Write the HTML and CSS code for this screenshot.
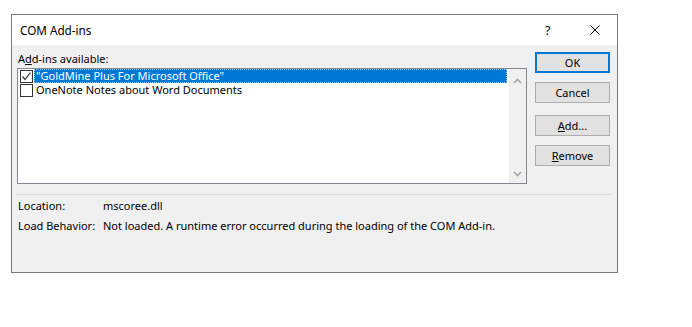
FILE: index.html
```html
<!DOCTYPE html>
<html>
<head>
<meta charset="utf-8">
<link rel="stylesheet" href="styles.css">
</head>
<body>
<div class="dialog">
  <div class="titlebar">
    <span class="title">COM Add-ins</span>
    <span class="help">?</span>
    <span class="close">
      <svg width="10" height="10" viewBox="0 0 10 10"><path d="M0.5 0.5 L9.5 9.5 M9.5 0.5 L0.5 9.5" stroke="#000" stroke-width="1" fill="none"/></svg>
    </span>
  </div>
  <div class="body">
    <div class="top">
      <div class="left">
        <div class="label">A<u>d</u>d-ins available:</div>
        <div class="listbox">
          <div class="items">
            <div class="item">
              <span class="check">
                <svg width="11" height="11" viewBox="0 0 11 11"><path d="M1.5 5.5 L4 8.5 L9.5 1.5" stroke="#333" stroke-width="1.2" fill="none"/></svg>
              </span>
              <span class="text selected">"GoldMine Plus For Microsoft Office"</span>
            </div>
            <div class="item">
              <span class="check"></span>
              <span class="text">OneNote Notes about Word Documents</span>
            </div>
          </div>
          <div class="scrollbar">
            <svg width="9" height="6" viewBox="0 0 9 6"><path d="M1 5 L4.5 1.5 L8 5" stroke="#a6a6a6" stroke-width="1.6" fill="none"/></svg>
            <svg width="9" height="6" viewBox="0 0 9 6"><path d="M1 1 L4.5 4.5 L8 1" stroke="#a6a6a6" stroke-width="1.6" fill="none"/></svg>
          </div>
        </div>
      </div>
      <div class="buttons">
        <div class="btn default">OK</div>
        <div class="btn">Cancel</div>
        <div class="btn gap"><span><u>A</u>dd...</span></div>
        <div class="btn"><span><u>R</u>emove</span></div>
      </div>
    </div>
    <div class="sep"></div>
    <div class="info">
      <div class="row"><span class="key">Location:</span><span>mscoree.dll</span></div>
      <div class="row"><span class="key">Load Behavior:</span><span>Not loaded. A runtime error occurred during the loading of the COM Add-in.</span></div>
    </div>
  </div>
</div>
</body>
</html>
```
FILE: styles.css
```css
* { box-sizing: border-box; }
html, body { margin: 0; padding: 0; background: #ffffff; }
body {
  font-family: "Noto Sans", "Open Sans", sans-serif;
  font-size: 11px;
  color: #000;
  padding: 14px 0 0 11px;
}
.dialog {
  width: 607px;
  height: 259px;
  border: 1px solid #7a7a7a;
  background: #f0f0f0;
  display: flex;
  flex-direction: column;
}
.titlebar {
  height: 30px;
  background: #fff;
  display: flex;
  align-items: center;
  padding-left: 8px;
  flex-shrink: 0;
}
.title { flex: 1; font-size: 11.7px; }
.help { width: 14px; font-size: 12.5px; margin-right: 31px; }
.close { width: 10px; height: 10px; margin-right: 17px; display: flex; }
.body {
  padding: 7px 7px 0 5px;
  flex: 1;
}
.top { display: flex; }
.left { width: 510px; }
.label { height: 16px; line-height: 14px; padding-left: 1px; }
.listbox {
  height: 116px;
  border: 1px solid #828790;
  background: #fff;
  display: flex;
}
.items { flex: 1; }
.item {
  height: 14px;
  display: flex;
  align-items: center;
  padding-left: 2px;
}
.check {
  width: 13px;
  height: 13px;
  border: 1px solid #333;
  background: #fff;
  display: flex;
  align-items: center;
  justify-content: center;
  flex-shrink: 0;
}
.item .text {
  flex: 1;
  height: 14px;
  line-height: 12px;
  margin-left: 1px;
  margin-right: 2px;
  padding-left: 1px;
  border: 1px dotted transparent;
  white-space: nowrap;
}
.item .text.selected {
  background: #0078d7;
  color: #fff;
  border-color: #9bc7ee;
}
.scrollbar {
  width: 17px;
  background: #f0f0f0;
  display: flex;
  flex-direction: column;
  justify-content: space-between;
  align-items: center;
  padding: 9px 0 6px 0;
}
.buttons {
  margin-left: 8px;
  width: 75px;
  display: flex;
  flex-direction: column;
}
.btn {
  height: 21px;
  border: 1px solid #adadad;
  background: #e1e1e1;
  display: flex;
  align-items: center;
  justify-content: center;
  margin-bottom: 9px;
}
.btn.default { border: 2px solid #0078d7; }
.btn.gap { margin-top: 3px; }
.sep {
  height: 1px;
  background: #dcdcdc;
  margin: 10px 0 0 0;
  width: 594px;
}
.info { padding-top: 1px; }
.row { height: 20px; line-height: 20px; display: flex; padding-left: 1px; white-space: nowrap; }
.key { width: 85px; flex-shrink: 0; }
```
